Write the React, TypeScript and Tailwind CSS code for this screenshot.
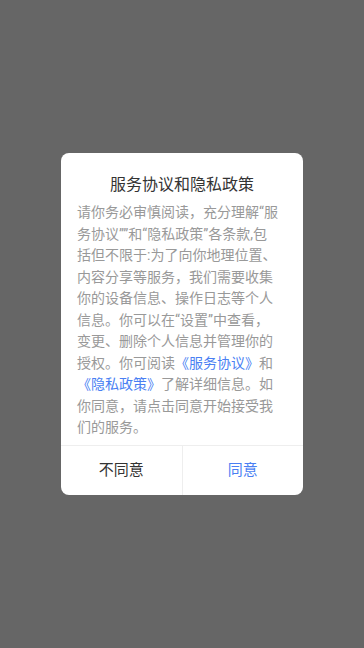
export default function App() {
  return (
    <div
      className="w-[364px] h-[648px] bg-[#666666] flex items-center justify-center"
      style={{ fontFamily: 'Roboto, "Noto Sans CJK SC", sans-serif' }}
    >
      <div className="w-[242px] bg-white rounded-[8px] overflow-hidden">
        <div className="pt-[21px] pl-[16px] pr-[24px] pb-[6.5px]">
          <h2 className="text-center text-[16px] leading-[22px] text-[#333333] pl-[8px]">服务协议和隐私政策</h2>
          <p className="mt-[6px] text-[14px] leading-[21.5px] text-[#999999]">
            请你务必审慎阅读，充分理解“服务协议””和“隐私政策”各条款,包括但不限于:为了向你地理位置、内容分享等服务，我们需要收集你的设备信息、操作日志等个人信息。你可以在“设置”中查看，变更、删除个人信息并管理你的授权。你可阅读
            <span className="text-[#4a7ff3]">《服务协议》</span>和
            <span className="text-[#4a7ff3]">《隐私政策》</span>了解详细信息。如你同意，请点击同意开始接受我们的服务。
          </p>
        </div>
        <div className="flex border-t border-[#eeeeee] h-[50px]">
          <button className="flex-1 text-[15px] text-[#333333]">不同意</button>
          <button className="flex-1 text-[15px] text-[#4a7ff3] border-l border-[#eeeeee]">同意</button>
        </div>
      </div>
    </div>
  );
}
